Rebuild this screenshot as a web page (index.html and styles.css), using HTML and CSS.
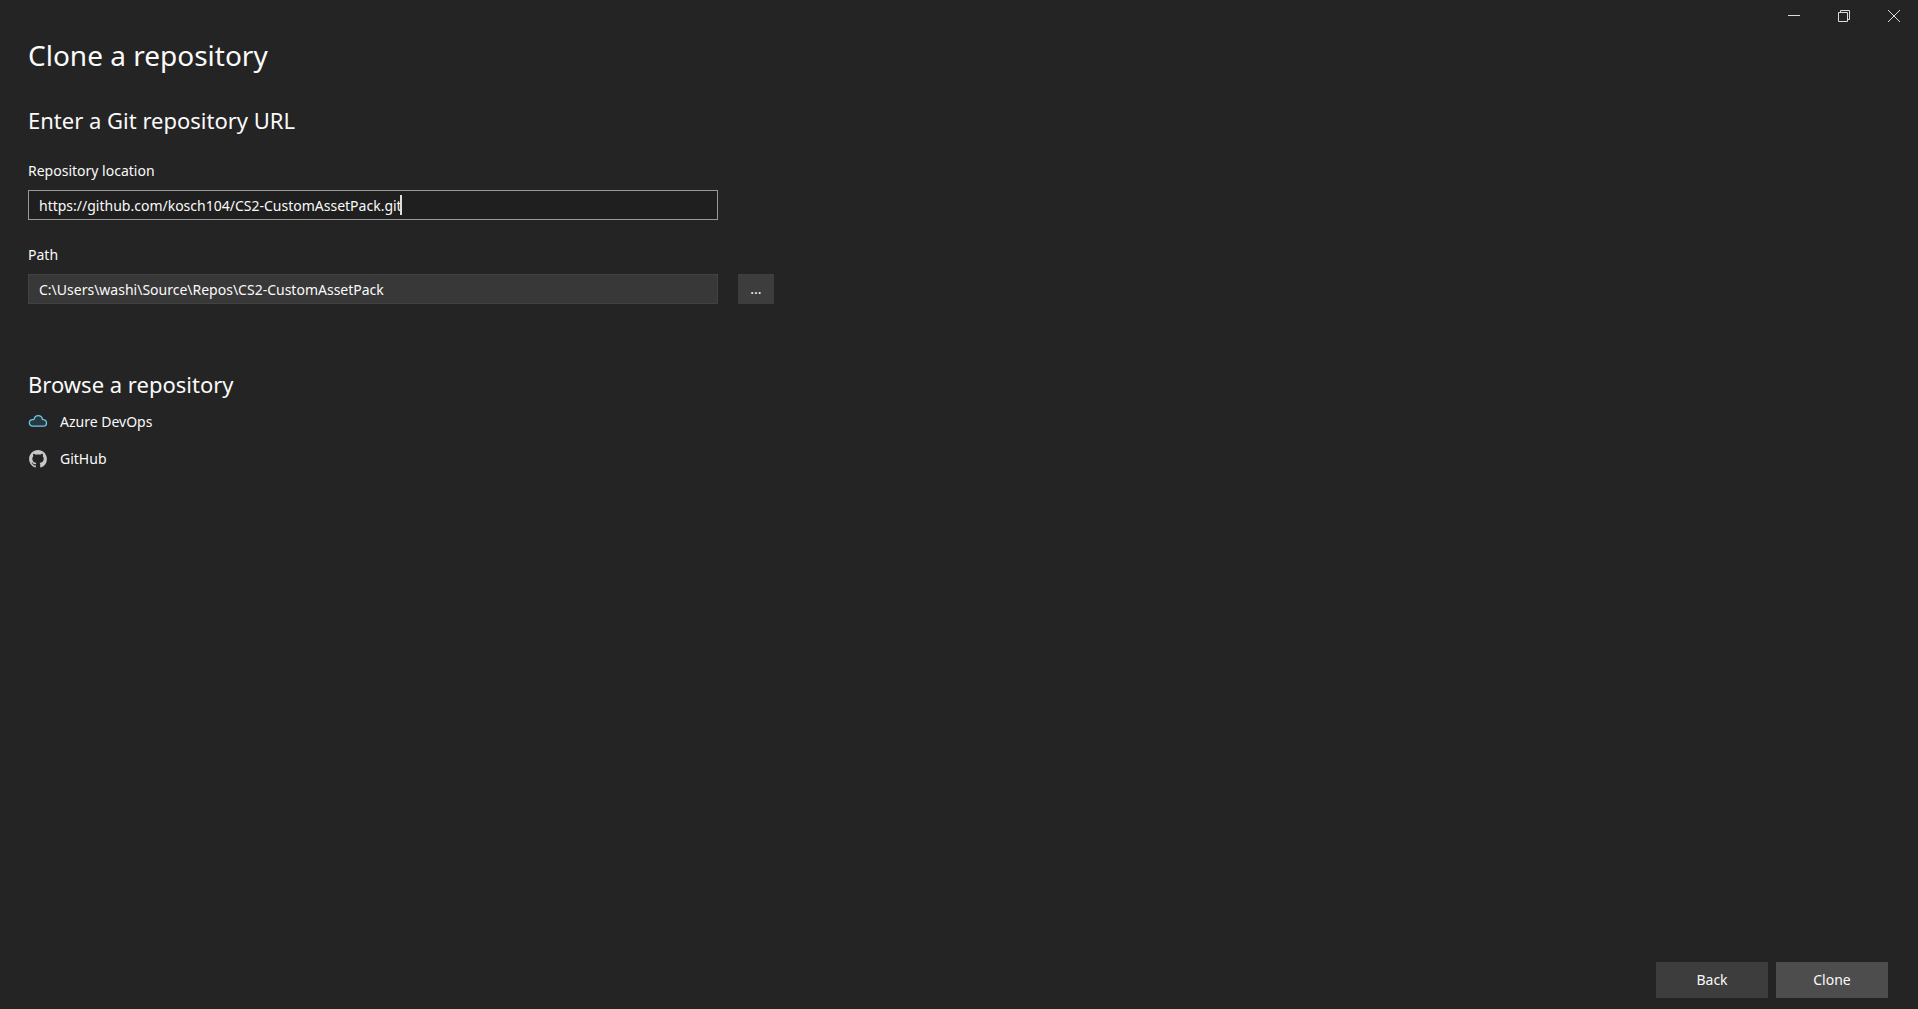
FILE: index.html
```html
<!DOCTYPE html>
<html lang="en">
<head>
    <meta charset="UTF-8">
    <meta name="viewport" content="width=device-width, initial-scale=1.0">
    <title>Clone a repository</title>
    <link rel="stylesheet" href="styles.css">
</head>
<body>
    <div class="titlebar">
        <button class="window-btn" type="button" aria-label="Minimize">
            <svg width="16" height="16" viewBox="0 0 16 16"><path d="M3 7.500h12"/></svg>
        </button>
        <button class="window-btn" type="button" aria-label="Restore">
            <svg width="16" height="16" viewBox="0 0 16 16"><path d="M3.500 4.500h9v9h-9zM5.500 4.500v-2h9v9h-2"/></svg>
        </button>
        <button class="window-btn" type="button" aria-label="Close">
            <svg width="16" height="16" viewBox="0 0 16 16"><path d="M3 2l12 12M15 2L3 14"/></svg>
        </button>
    </div>

    <main>
        <h1>Clone a repository</h1>

        <form id="cloneForm">
            <h2>Enter a Git repository URL</h2>

            <label for="location">Repository location</label>
            <div class="row">
                <div class="field">
                    <input class="active" type="text" id="location" value="https://github.com/kosch104/CS2-CustomAssetPack.git" spellcheck="false">
                    <span class="caret"></span>
                </div>
            </div>

            <label for="path">Path</label>
            <div class="row">
                <div class="field">
                    <input type="text" id="path" value="C:\Users\washi\Source\Repos\CS2-CustomAssetPack" spellcheck="false">
                </div>
                <button class="browse" type="button" aria-label="Browse for path">...</button>
            </div>
        </form>

        <section class="providers">
            <h2>Browse a repository</h2>
            <a href="#azure">
                <svg width="20" height="20" viewBox="0 0 20 20">
                    <path class="cloud" d="M4.800 14.200C2.700 14.200 1.400 12.800 1.400 11C1.400 9.200 2.800 7.700 4.600 7.700C5.200 7.700 5.700 7.600 6 7.300C6.600 5 8.200 3.700 10.200 3.700C12.500 3.700 14 5.100 14.500 7.400C17 7.700 18.500 9.200 18.500 11C18.500 12.800 17.100 14.200 15.200 14.200Z"/>
                </svg>
                Azure DevOps
            </a>
            <a href="#github">
                <svg width="20" height="20" viewBox="-1 -1 18 18">
                    <path class="octocat" d="M8 0C3.580 0 0 3.580 0 8c0 3.540 2.290 6.530 5.470 7.590.4.070.55-.17.55-.38 0-.19-.01-.82-.01-1.490-2.010.37-2.530-.49-2.690-.94-.09-.23-.48-.94-.82-1.130-.28-.15-.68-.52-.01-.53.63-.01 1.080.58 1.230.82.72 1.210 1.870.87 2.330.66.07-.52.28-.87.51-1.070-1.780-.2-3.640-.89-3.640-3.950 0-.87.31-1.590.82-2.150-.08-.2-.36-1.020.08-2.120 0 0 .67-.21 2.200.82.64-.18 1.320-.27 2-.27s1.360.09 2 .27c1.530-1.040 2.200-.82 2.200-.82.44 1.100.16 1.920.08 2.120.51.56.82 1.270.82 2.150 0 3.070-1.870 3.750-3.650 3.950.29.25.54.73.54 1.480 0 1.070-.01 1.930-.01 2.200 0 .21.15.46.55.38A8.010 8.010 0 0 0 16 8c0-4.420-3.580-8-8-8z"/>
                </svg>
                GitHub
            </a>
        </section>
    </main>

    <footer>
        <button type="button">Back</button>
        <button class="primary" type="submit" form="cloneForm">Clone</button>
    </footer>
</body>
</html>
```
FILE: styles.css
```css
* {
    box-sizing: border-box;
}

body {
    display: flex;
    flex-direction: column;
    min-height: 100vh;
    margin: 0;
    background-color: #242424;
    color: #fafafa;
    font-family: 'Segoe UI', 'Noto Sans', sans-serif;
    font-size: 14px;
    line-height: 20px;
}

button, input {
    border: none;
    padding: 0;
    color: inherit;
    font: inherit;
}

.titlebar {
    display: flex;
    justify-content: flex-end;
    height: 32px;
}

.window-btn {
    display: flex;
    align-items: center;
    justify-content: center;
    width: 50px;
    background: none;
}

.window-btn path {
    fill: none;
    stroke: #dcdcdc;
}

main {
    flex: 1;
    padding: 0 28px;
}

h1, h2 {
    margin: 0;
    font-weight: normal;
}

h1 {
    margin-bottom: 26px;
    font-size: 28px;
    line-height: 46px;
}

h2 {
    font-size: 22px;
    line-height: 32px;
}

label {
    display: block;
    margin: 25px 0 9px;
}

.row {
    display: flex;
    gap: 20px;
}

.field {
    position: relative;
    flex: 0 1 690px;
}

input {
    display: block;
    width: 100%;
    height: 30px;
    padding: 0 10px;
    border: 1px solid #424242;
    background-color: #383838;
}

input.active {
    border-color: #999;
    background-color: #1f1f1f;
    outline: none;
}

/* text cursor drawn over the url field */
.caret {
    position: absolute;
    top: 5px;
    left: 372px;
    width: 2px;
    height: 20px;
    background-color: #ddd;
}

.browse {
    width: 36px;
    background-color: #3d3d3d;
}

.providers {
    margin-top: 64px;
}

.providers h2 {
    margin-bottom: 12px;
}

.providers a {
    display: flex;
    align-items: center;
    gap: 12px;
    width: fit-content;
    margin-bottom: 17px;
    color: inherit;
    text-decoration: none;
}

.cloud {
    fill: #283840;
    stroke: #6cc8ee;
    stroke-width: 1.3;
}

.octocat {
    fill: #c8c8c8;
}

footer {
    display: flex;
    justify-content: flex-end;
    gap: 8px;
    padding: 11px 30px;
}

footer button {
    width: 112px;
    height: 36px;
    background-color: #3d3d3d;
}

footer .primary {
    background-color: #4d4d4d;
}
```
